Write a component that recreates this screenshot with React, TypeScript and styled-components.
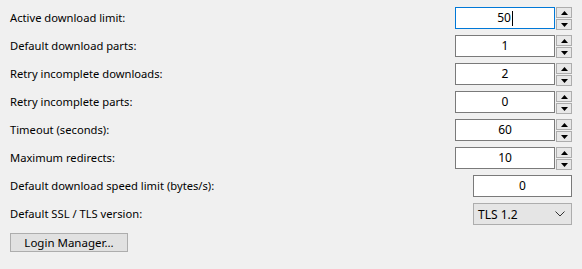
import React from 'react';
import styled, { createGlobalStyle } from 'styled-components';

const GlobalStyle = createGlobalStyle`
  html, body {
    margin: 0;
    padding: 0;
    background-color: #f0f0f0;
  }
  body {
    font-family: "Noto Sans", "Liberation Sans", sans-serif;
    font-size: 11.2px;
    color: #000;
  }
`;

const Panel = styled.div`
  width: 582px;
  height: 269px;
  box-sizing: border-box;
  padding: 4px 10px 0 10px;
  display: flex;
  flex-direction: column;
`;

const Row = styled.div`
  height: 28px;
  display: flex;
  align-items: center;
  justify-content: space-between;
`;

const Label = styled.span`
  line-height: 16px;
`;

const SpinWrap = styled.div`
  display: flex;
  align-items: stretch;
  height: 23px;
  margin-top: 1px;
`;

const TextBox = styled.div<{ $active?: boolean; $width: number }>`
  width: ${(p) => p.$width}px;
  height: 22px;
  box-sizing: border-box;
  border: 1px solid ${(p) => (p.$active ? '#0078d7' : '#7a7a7a')};
  background: #fff;
  display: flex;
  align-items: center;
  justify-content: center;
  line-height: 16px;
  font-size: 12px;
`;

const Caret = styled.span`
  display: inline-block;
  width: 1px;
  height: 15px;
  background: #000;
  margin-left: 1px;
`;

const Spinner = styled.div`
  width: 16px;
  margin-left: 1px;
  display: flex;
  flex-direction: column;
  gap: 1px;
`;

const SpinButton = styled.div`
  flex: 1;
  box-sizing: border-box;
  border: 1px solid #adadad;
  background: #e8e8e8;
  display: flex;
  align-items: center;
  justify-content: center;
`;

const Select = styled.div`
  width: 99px;
  height: 22px;
  box-sizing: border-box;
  border: 1px solid #adadad;
  background: #e5e5e5;
  display: flex;
  align-items: center;
  justify-content: space-between;
  padding: 0 6px 0 4px;
  font-size: 12px;
`;

const Button = styled.div`
  width: 118px;
  height: 19px;
  box-sizing: border-box;
  border: 1px solid #adadad;
  background: #e1e1e1;
  display: flex;
  align-items: center;
  justify-content: center;
  font-size: 11.5px;
`;

const Triangle = ({ up }: { up?: boolean }) => (
  <svg width="7" height="4" viewBox="0 0 7 4">
    <path d={up ? 'M0 4 L3.5 0 L7 4 Z' : 'M0 0 L3.5 4 L7 0 Z'} fill="#000" />
  </svg>
);

const Chevron = () => (
  <svg width="10" height="6" viewBox="0 0 10 6">
    <path d="M0.5 0.5 L5 5 L9.5 0.5" fill="none" stroke="#333" strokeWidth="1" />
  </svg>
);

const spinRows: { label: string; value: string; active?: boolean }[] = [
  { label: 'Active download limit:', value: '50', active: true },
  { label: 'Default download parts:', value: '1' },
  { label: 'Retry incomplete downloads:', value: '2' },
  { label: 'Retry incomplete parts:', value: '0' },
  { label: 'Timeout (seconds):', value: '60' },
  { label: 'Maximum redirects:', value: '10' },
];

export default function App() {
  return (
    <>
      <GlobalStyle />
      <Panel>
        {spinRows.map((r) => (
          <Row key={r.label}>
            <Label>{r.label}</Label>
            <SpinWrap>
              <TextBox $width={100} $active={r.active}>
                {r.value}
                {r.active && <Caret />}
              </TextBox>
              <Spinner>
                <SpinButton>
                  <Triangle up />
                </SpinButton>
                <SpinButton>
                  <Triangle />
                </SpinButton>
              </Spinner>
            </SpinWrap>
          </Row>
        ))}
        <Row>
          <Label>Default download speed limit (bytes/s):</Label>
          <TextBox $width={99}>0</TextBox>
        </Row>
        <Row>
          <Label>Default SSL / TLS version:</Label>
          <Select>
            <span>TLS 1.2</span>
            <Chevron />
          </Select>
        </Row>
        <Row>
          <Button>Login Manager...</Button>
        </Row>
      </Panel>
    </>
  );
}
